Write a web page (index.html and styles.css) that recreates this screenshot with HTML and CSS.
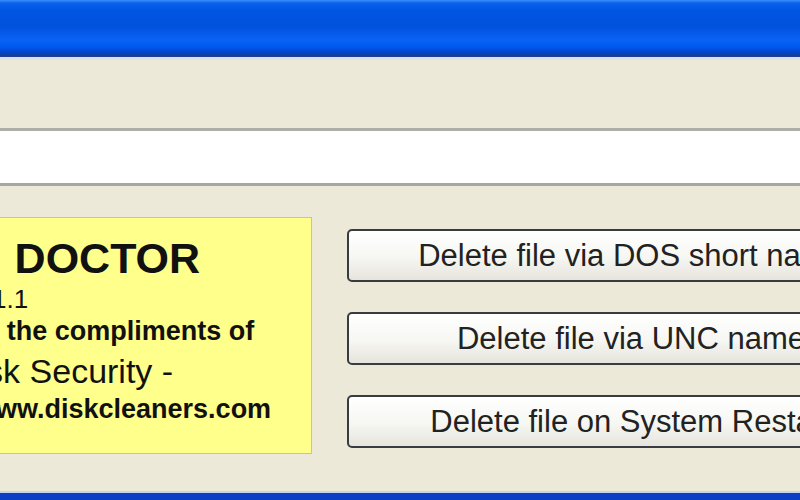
FILE: index.html
```html
<!DOCTYPE html>
<html lang="en" class="html">
<head>
    <meta charset="UTF-8">
    <meta name="viewport" content="width=device-width, initial-scale=1.0">
    <title>Delete Doctor</title>
    <link rel="stylesheet" href="styles.css">
</head>
<body class="body">
    <div class="window__title"></div>
    <div class="window__title-edge"></div>

    <div class="window__toolbar"></div>

    <input type="text" class="window__path" value="">

    <main class="window__main">
        <div class="about">
            <p class="about__line about__line_title">DELETE DOCTOR</p>
            <p class="about__line about__line_version">Version 1.1</p>
            <p class="about__line about__line_thanks">With the compliments of</p>
            <p class="about__line about__line_company">Disk Security -</p>
            <p class="about__line about__line_site">www.diskcleaners.com</p>
        </div>

        <div class="actions">
            <button class="actions__button">Delete file via DOS short name</button>
            <button class="actions__button">Delete file via UNC name</button>
            <button class="actions__button">Delete file on System Restart</button>
        </div>
    </main>

    <div class="window__bottom"></div>
</body>
</html>
```

FILE: styles.css
```css
* {
    margin: 0;
    padding: 0;
    box-sizing: border-box;
}

.html,
.body {
    width: 800px;
    height: 500px;
    overflow: hidden;
}

.body {
    display: flex;
    flex-flow: column nowrap;
    background-color: #ece9d8;
    font-family: "Liberation Sans", Arial, sans-serif;
    color: #111;
}

.window__title {
    flex-shrink: 0;
    height: 57px;
    background: linear-gradient(to bottom,
        #3d8ff8 0,
        #0b62ee 3px,
        #0055e3 10px,
        #0052dc 26px,
        #0a62f6 40px,
        #0059ee 47px,
        #0046cf 52px,
        #123c9e 55px,
        #25408c 57px);
}

.window__title-edge {
    flex-shrink: 0;
    height: 3px;
    background-color: #dce2ec;
}

.window__toolbar {
    flex-shrink: 0;
    height: 68px;
}

.window__path {
    flex-shrink: 0;
    width: 100%;
    height: 58px;
    border: none;
    border-top: 3px solid #aeaea8;
    border-bottom: 3px solid #a6a6a2;
    background-color: #fff;
    outline: none;
}

.window__main {
    flex: 1;
    display: flex;
    flex-flow: row nowrap;
    align-items: flex-start;
    padding-top: 31px;
}

.about {
    flex-shrink: 0;
    margin-left: -200px;
    width: 512px;
    height: 237px;
    padding-top: 16px;
    border: 1px solid #c9c59a;
    background-color: #ffff8c;
    white-space: nowrap;
}

.about__line_title {
    padding-left: 6px;
    font-size: 43px;
    font-weight: bold;
    line-height: 48px;
    word-spacing: 26px;
}

.about__line_version {
    padding-left: 97px;
    font-size: 26px;
    line-height: 34px;
}

.about__line_thanks {
    padding-left: 140px;
    font-size: 27px;
    font-weight: bold;
    line-height: 31px;
}

.about__line_company {
    padding-left: 153px;
    font-size: 34px;
    line-height: 48px;
}

.about__line_site {
    padding-left: 174px;
    font-size: 27px;
    font-weight: bold;
    line-height: 29px;
}

.actions {
    flex-shrink: 0;
    display: flex;
    flex-flow: column nowrap;
    gap: 30px;
    margin-left: 35px;
    padding-top: 12px;
}

.actions__button {
    width: 568px;
    height: 53px;
    border: 2px solid #383c41;
    border-radius: 5px;
    background: linear-gradient(to bottom, #ffffff 0, #f6f6f2 55%, #e6e4dc 100%);
    font-family: "Liberation Sans", Arial, sans-serif;
    font-size: 31px;
    color: #222;
    white-space: nowrap;
}

.window__bottom {
    flex-shrink: 0;
    height: 9px;
    border-top: 2px solid #c7d4f0;
    background-color: #0b3fc4;
}
```
